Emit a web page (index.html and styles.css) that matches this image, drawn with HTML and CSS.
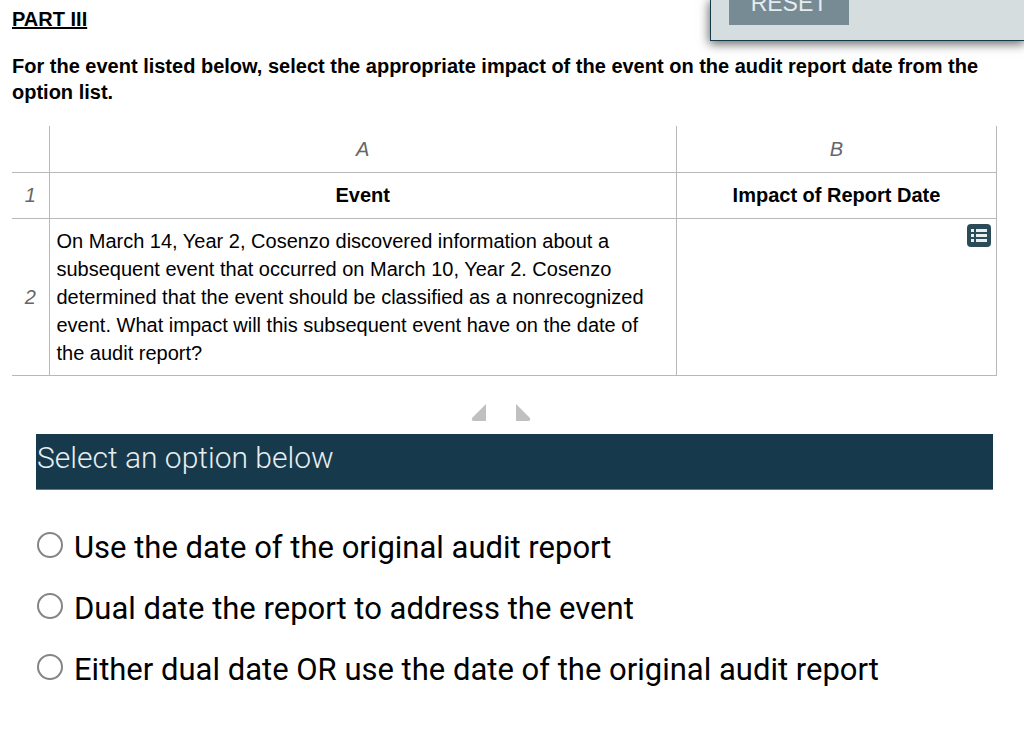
FILE: index.html
```html
<!DOCTYPE html>
<html lang="en">
<head>
<meta charset="utf-8">
<meta name="viewport" content="width=device-width, initial-scale=1">
<title>Part III</title>
<link rel="stylesheet" href="styles.css">
</head>
<body>
<aside class="tools"><button class="reset" type="button">RESET</button></aside>
<main class="page">
  <h1 class="heading">PART III</h1>
  <p class="intro">For the event listed below, select the appropriate impact of the event on the audit report date from the option list.</p>
  <table class="sheet">
    <colgroup><col class="col-num"><col class="col-event"><col class="col-impact"></colgroup>
    <tbody>
    <tr class="short"><td></td><th class="label" scope="col">A</th><th class="label" scope="col">B</th></tr>
    <tr class="short"><th class="label" scope="row">1</th><th>Event</th><th>Impact of Report Date</th></tr>
    <tr>
      <th class="label" scope="row">2</th>
      <td class="event">On March 14, Year 2, Cosenzo discovered information about a subsequent event that occurred on March 10, Year 2. Cosenzo determined that the event should be classified as a nonrecognized event. What impact will this subsequent event have on the date of the audit report?</td>
      <td class="answer"><button class="list-button" type="button" aria-label="Open option list"><svg viewBox="0 0 24 23" width="24" height="23" fill="#e9eef0"><path d="M4 5h3v3H4zM9 5h11v3H9zM4 10h3v3H4zM9 10h11v3H9zM4 15h3v3H4zM9 15h11v3H9z"/></svg></button></td>
    </tr>
    </tbody>
  </table>
  <div class="arrows">
    <svg width="16" height="18" viewBox="0 0 16 18" fill="#c0c0c0"><path d="M15 0v17H2Q0 16 1 14Z"/></svg>
    <svg width="16" height="18" viewBox="0 0 16 18" fill="#c0c0c0"><path d="M1 0v17h13q2-1 1-3Z"/></svg>
  </div>
  <fieldset class="options">
    <legend class="options-title">Select an option below</legend>
    <label class="option"><input class="radio" type="radio" name="impact">Use the date of the original audit report</label>
    <label class="option"><input class="radio" type="radio" name="impact">Dual date the report to address the event</label>
    <label class="option"><input class="radio" type="radio" name="impact">Either dual date OR use the date of the original audit report</label>
  </fieldset>
</main>
</body>
</html>
```
FILE: styles.css
```css
* { box-sizing: border-box; }
body {
  margin: 0;
  background: #fff;
  color: #000;
  font: 20px/28px "Liberation Sans", Arial, sans-serif;
  overflow-x: hidden;
}
.page { padding: 6px 27px 24px 12px; }
.heading {
  margin: 0 0 21px;
  font-size: 20px;
  line-height: 26px;
  text-decoration: underline;
}
.intro {
  margin: 0 0 21px;
  font-weight: bold;
  line-height: 26px;
}
.tools {
  position: absolute;
  top: 0;
  right: 0;
  width: 314px;
  height: 41px;
  padding: 0 18px 15px;
  display: flex;
  align-items: flex-end;
  background: #d6dddf;
  border: solid #17394c;
  border-width: 0 0 1px 1px;
  box-shadow: 0 2px 10px 1px rgba(0, 0, 0, 0.6);
}
.reset {
  flex: none;
  width: 120px;
  height: 44px;
  padding: 0;
  border: 0;
  background: #778b95;
  color: #e6ebed;
  font: 23px/44px "Liberation Sans", Arial, sans-serif;
}
.sheet {
  width: 100%;
  table-layout: fixed;
  border-collapse: collapse;
  border-bottom: 1px solid #b8b8b8;
}
.col-num { width: 37px; }
.col-impact { width: 320px; }
.short { height: 46px; }
.sheet td, .sheet th { padding: 8px 7px; border: 1px solid #b8b8b8; }
.sheet tr > :first-child { border-left: 0; }
.sheet tr:first-child > * { border-top: 0; }
.sheet .label {
  padding: 0;
  color: #666;
  font-weight: normal;
  font-style: italic;
}
.event { text-align: left; }
.sheet .answer { padding: 5px; vertical-align: top; text-align: right; }
.list-button {
  width: 24px;
  height: 23px;
  padding: 0;
  border: 0;
  border-radius: 4px;
  background: #2b4b59;
}
.list-button svg { display: block; }
.arrows {
  display: flex;
  justify-content: center;
  gap: 28px;
  margin: 28px 0 12px;
  padding-right: 8px;
}
.options {
  margin: 0 4px 0 24px;
  padding: 0;
  border: 0;
  min-width: 0;
  font: 31px/37px Roboto, sans-serif;
}
.options-title {
  width: 100%;
  height: 56px;
  margin-bottom: 39px;
  padding: 5px 1px;
  background: #17394c;
  border-bottom: 1px solid #60798a;
  color: #e8edf0;
  font-size: 30px;
  font-weight: 300;
}
.option {
  display: flex;
  align-items: flex-start;
  gap: 11px;
  margin-bottom: 24px;
}
.radio {
  appearance: none;
  flex: none;
  width: 26px;
  height: 26px;
  margin: 3px 0 0 1px;
  border: 2px solid #858585;
  border-radius: 50%;
  background: #fff;
}
.radio:checked { box-shadow: inset 0 0 0 4px #fff; background: #17394c; }
```
